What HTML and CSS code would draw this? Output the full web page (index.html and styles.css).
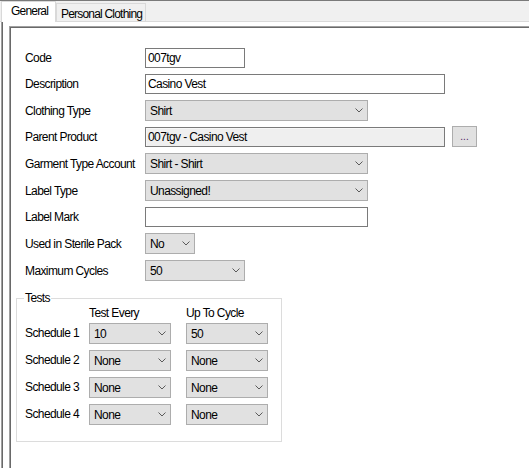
FILE: index.html
```html
<!DOCTYPE html>
<html>
<head>
<meta charset="utf-8">
<link rel="stylesheet" href="styles.css">
</head>
<body>
<div class="window">
  <div class="tabstrip">
    <div class="tab active">General</div>
    <div class="tab">Personal Clothing</div>
  </div>
  <div class="page">
    <div class="panel">
      <div class="form">
        <div class="row"><span class="lbl">Code</span><div class="text w100">007tgv</div></div>
        <div class="row"><span class="lbl">Description</span><div class="text w300">Casino Vest</div></div>
        <div class="row"><span class="lbl">Clothing Type</span><div class="combo w223"><span>Shirt</span><svg class="chev" width="8" height="5" viewBox="0 0 8 5"><polyline points="0.5,0.5 4,4 7.5,0.5"/></svg></div></div>
        <div class="row top"><span class="lbl">Parent Product</span><div class="text w300 ro">007tgv - Casino Vest</div><div class="btn">...</div></div>
        <div class="row"><span class="lbl">Garment Type Account</span><div class="combo w223"><span>Shirt - Shirt</span><svg class="chev" width="8" height="5" viewBox="0 0 8 5"><polyline points="0.5,0.5 4,4 7.5,0.5"/></svg></div></div>
        <div class="row"><span class="lbl">Label Type</span><div class="combo w223"><span>Unassigned!</span><svg class="chev" width="8" height="5" viewBox="0 0 8 5"><polyline points="0.5,0.5 4,4 7.5,0.5"/></svg></div></div>
        <div class="row"><span class="lbl">Label Mark</span><div class="text w223"></div></div>
        <div class="row"><span class="lbl">Used in Sterile Pack</span><div class="combo w50"><span>No</span><svg class="chev" width="8" height="5" viewBox="0 0 8 5"><polyline points="0.5,0.5 4,4 7.5,0.5"/></svg></div></div>
        <div class="row"><span class="lbl">Maximum Cycles</span><div class="combo w100"><span>50</span><svg class="chev" width="8" height="5" viewBox="0 0 8 5"><polyline points="0.5,0.5 4,4 7.5,0.5"/></svg></div></div>
      </div>
      <fieldset class="tests">
        <legend>Tests</legend>
        <div class="heads"><span class="h1">Test Every</span><span>Up To Cycle</span></div>
        <div class="grid">
          <span class="slbl">Schedule 1</span>
          <div class="combo"><span>10</span><svg class="chev" width="8" height="5" viewBox="0 0 8 5"><polyline points="0.5,0.5 4,4 7.5,0.5"/></svg></div>
          <div class="combo"><span>50</span><svg class="chev" width="8" height="5" viewBox="0 0 8 5"><polyline points="0.5,0.5 4,4 7.5,0.5"/></svg></div>
          <span class="slbl">Schedule 2</span>
          <div class="combo"><span>None</span><svg class="chev" width="8" height="5" viewBox="0 0 8 5"><polyline points="0.5,0.5 4,4 7.5,0.5"/></svg></div>
          <div class="combo"><span>None</span><svg class="chev" width="8" height="5" viewBox="0 0 8 5"><polyline points="0.5,0.5 4,4 7.5,0.5"/></svg></div>
          <span class="slbl">Schedule 3</span>
          <div class="combo"><span>None</span><svg class="chev" width="8" height="5" viewBox="0 0 8 5"><polyline points="0.5,0.5 4,4 7.5,0.5"/></svg></div>
          <div class="combo"><span>None</span><svg class="chev" width="8" height="5" viewBox="0 0 8 5"><polyline points="0.5,0.5 4,4 7.5,0.5"/></svg></div>
          <span class="slbl">Schedule 4</span>
          <div class="combo"><span>None</span><svg class="chev" width="8" height="5" viewBox="0 0 8 5"><polyline points="0.5,0.5 4,4 7.5,0.5"/></svg></div>
          <div class="combo"><span>None</span><svg class="chev" width="8" height="5" viewBox="0 0 8 5"><polyline points="0.5,0.5 4,4 7.5,0.5"/></svg></div>
        </div>
      </fieldset>
    </div>
  </div>
</div>
</body>
</html>
```
FILE: styles.css
```css
* { box-sizing: border-box; }
html, body { margin: 0; padding: 0; }
body {
  width: 529px;
  height: 468px;
  overflow: hidden;
  background: #ffffff;
  font-family: "Liberation Sans", Arial, sans-serif;
  font-size: 12px;
  line-height: 14px;
  letter-spacing: -0.6px;
  color: #000000;
}
.window {
  height: 468px;
  border-top: 1px solid #7a7a7a;
  display: flex;
  flex-direction: column;
}
.tabstrip {
  height: 21px;
  flex: none;
  background: #f0f0f0;
  border-bottom: 1px solid #d9d9d9;
  display: flex;
  align-items: flex-end;
  padding-left: 1px;
}
.tab {
  height: 18px;
  padding: 3px 0 0 4px;
  width: 90px;
  border: 1px solid #d9d9d9;
  border-bottom: none;
  background: #f0f0f0;
  letter-spacing: -0.8px;
}
.tab.active {
  width: 55px;
  height: 21px;
  margin-bottom: -1px;
  padding: 2px 0 0 9px;
  background: #ffffff;
  position: relative;
  z-index: 1;
}
.page {
  flex: 1;
  margin-left: 1px;
  border-left: 1px solid #a0a0a0;
  box-shadow: inset 1px 0 0 #696969;
  padding: 4px 0 0 7px;
  display: flex;
}
.panel {
  flex: 1;
  border-top: 1px solid #a0a0a0;
  border-left: 1px solid #a0a0a0;
  box-shadow: inset 1px 1px 0 #696969;
  padding: 1px 0 0 1px;
}
.form {
  display: flex;
  flex-direction: column;
  gap: 6px;
  padding: 20px 0 0 14px;
}
.row {
  display: flex;
  align-items: center;
}
.row.top { align-items: flex-start; }
.row.top .lbl { align-self: center; }
.lbl { width: 120px; flex: none; white-space: nowrap; }
.text {
  height: 20px;
  border: 1px solid #7a7a7a;
  background: #ffffff;
  padding: 0 2px;
  display: flex;
  align-items: center;
  white-space: nowrap;
}
.text.ro { background: #efefef; box-shadow: inset 1px 1px 0 #f7f7f7; }
.combo {
  height: 21px;
  border: 1px solid #adadad;
  background: #e1e1e1;
  padding: 0 4px 0 4px;
  display: flex;
  align-items: center;
  justify-content: space-between;
  white-space: nowrap;
}
.chev { flex: none; }
.chev polyline { fill: none; stroke: #5a5a5a; stroke-width: 1; }
.w50 { width: 50px; }
.w100 { width: 100px; }
.w223 { width: 223px; }
.w300 { width: 300px; }
.btn {
  width: 25px;
  height: 21px;
  margin: -1px 0 0 7px;
  border: 1px solid #adadad;
  background: #e1e1e1;
  display: flex;
  align-items: center;
  justify-content: center;
  color: #502060;
  font-size: 10px;
  letter-spacing: 0;
}
.tests {
  width: 266px;
  min-width: 0;
  height: 150px;
  margin: 11px 0 0 5px;
  padding: 0 8px 0 8px;
  border: 1px solid #dcdcdc;
}
.tests legend {
  padding: 0 1px;
  margin-left: -1px;
  line-height: 13px;
}
.heads {
  display: flex;
  margin-top: 1px;
  padding-left: 64px;
  height: 17px;
  white-space: nowrap;
}
.heads .h1 { width: 97px; }
.grid {
  display: grid;
  grid-template-columns: 49px 82px 82px;
  column-gap: 15px;
  row-gap: 6px;
  align-items: center;
}
.slbl { margin-top: -2px; white-space: nowrap; }
```
